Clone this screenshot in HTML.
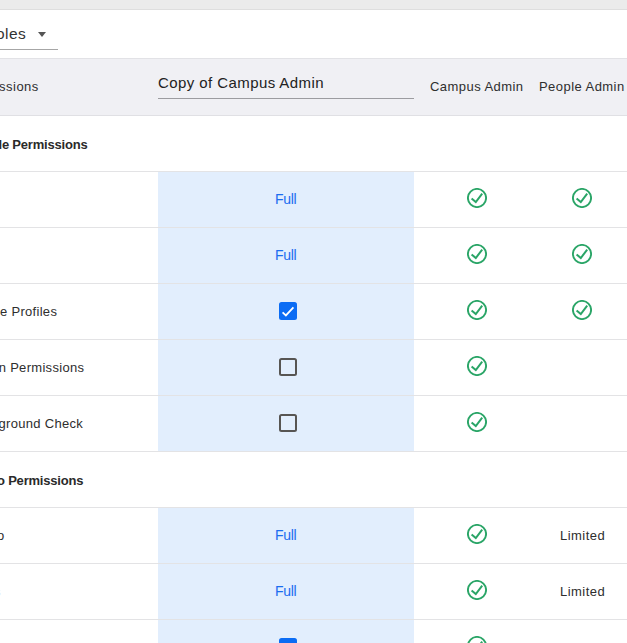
<!DOCTYPE html>
<html><head><meta charset="utf-8">
<style>
*{margin:0;padding:0;box-sizing:border-box}
html,body{width:627px;height:643px;overflow:hidden;background:#fff;font-family:"Liberation Sans",sans-serif;color:#222}
.a{position:absolute}
.topbar{left:0;top:0;width:627px;height:10px;background:#ebebeb;border-bottom:1px solid #dedede}
.hdr{left:0;top:58px;width:627px;height:58px;background:#f0f0f4;border-top:1px solid #e2e2e6;border-bottom:1px solid #e0e0e4}
.hline{left:0;width:627px;height:1px;background:#e3e3e5}
.blue{left:158px;width:256px;background:#e2eefd}
.t{white-space:nowrap;font-size:13px;line-height:1;color:#2e2e2e}
.full{color:#1a6cf0;font-size:14px;letter-spacing:-0.3px}
.chk{width:20px;height:20px}
</style></head><body>
<div class="a topbar"></div>
<!-- dropdown -->
<div class="a t" style="left:-4px;top:26px;font-size:15.5px;color:#333;letter-spacing:0.45px">oles</div>
<svg class="a" style="left:37px;top:31px" width="10" height="7" viewBox="0 0 10 7"><path d="M1 1 L9 1 L5 6 Z" fill="#555"/></svg>
<div class="a" style="left:0;top:49px;width:58px;height:1px;background:#a6a6a6"></div>

<div class="a hdr"></div>
<div class="a t" style="left:-1px;top:80px;font-size:13px;letter-spacing:0.5px">ssions</div>
<div class="a t" style="left:158px;top:75px;font-size:15px;color:#222;letter-spacing:0.42px">Copy of Campus Admin</div>
<div class="a" style="left:158px;top:98px;width:256px;height:1px;background:#9c9ca0"></div>
<div class="a t" style="left:430px;top:80px;font-size:13px;letter-spacing:0.45px">Campus Admin</div>
<div class="a t" style="left:539px;top:80px;font-size:13px;letter-spacing:0.45px">People Admin</div>

<!-- blue column -->
<div class="a blue" style="top:172px;height:280px"></div>
<div class="a blue" style="top:508px;height:135px"></div>

<!-- lines -->
<div class="a hline" style="top:171px"></div>
<div class="a hline" style="top:227px"></div>
<div class="a hline" style="top:283px"></div>
<div class="a hline" style="top:339px"></div>
<div class="a hline" style="top:395px"></div>
<div class="a hline" style="top:451px"></div>
<div class="a hline" style="top:507px"></div>
<div class="a hline" style="top:563px"></div>
<div class="a hline" style="top:619px"></div>

<!-- section titles -->
<div class="a t" style="left:-1.5px;top:138px;font-weight:bold;color:#2a2a2a;letter-spacing:-0.2px">le Permissions</div>
<div class="a t" style="left:-3px;top:474px;font-weight:bold;color:#2a2a2a;letter-spacing:-0.2px">o Permissions</div>

<!-- row labels -->
<div class="a t" style="left:0px;top:305px;letter-spacing:0.3px">e Profiles</div>
<div class="a t" style="left:-1.3px;top:361px;letter-spacing:0.3px">n Permissions</div>
<div class="a t" style="left:-1.5px;top:417px;letter-spacing:0.3px">ground Check</div>
<div class="a t" style="left:-3px;top:529px">o</div>
<div class="a t" style="left:-6px;top:585px;color:#bbb">s</div>

<!-- Full -->
<div class="a t full" style="left:275px;top:192px">Full</div>
<div class="a t full" style="left:275px;top:248px">Full</div>
<div class="a t full" style="left:275px;top:528px">Full</div>
<div class="a t full" style="left:275px;top:584px">Full</div>

<!-- checkboxes -->
<svg class="a" style="left:279px;top:302px" width="18" height="18" viewBox="0 0 18 18"><rect x="0" y="0" width="18" height="18" rx="2.5" fill="#0b6cf4"/><path d="M3.6 10.3 L6.9 13.4 L14.4 5.4" fill="none" stroke="#fff" stroke-width="1.8"/></svg>
<svg class="a" style="left:279px;top:358px" width="18" height="18" viewBox="0 0 18 18"><rect x="1" y="1" width="16" height="16" rx="1.5" fill="none" stroke="#575553" stroke-width="2"/></svg>
<svg class="a" style="left:279px;top:414px" width="18" height="18" viewBox="0 0 18 18"><rect x="1" y="1" width="16" height="16" rx="1.5" fill="none" stroke="#575553" stroke-width="2"/></svg>
<svg class="a" style="left:279px;top:638px" width="18" height="18" viewBox="0 0 18 18"><rect x="0" y="0" width="18" height="18" rx="2.5" fill="#0b6cf4"/></svg>

<!-- green checks -->
<svg width="0" height="0" style="position:absolute"><defs><g id="gc"><circle cx="10" cy="10" r="9.1" fill="none" stroke="#2aa567" stroke-width="1.9"/><path d="M4.6 10.4 L8.8 14 L15.2 5.6" fill="none" stroke="#2aa567" stroke-width="2"/></g></defs></svg>
<svg class="a chk" style="left:467px;top:188px"><use href="#gc"/></svg>
<svg class="a chk" style="left:572px;top:188px"><use href="#gc"/></svg>
<svg class="a chk" style="left:467px;top:244px"><use href="#gc"/></svg>
<svg class="a chk" style="left:572px;top:244px"><use href="#gc"/></svg>
<svg class="a chk" style="left:467px;top:300px"><use href="#gc"/></svg>
<svg class="a chk" style="left:572px;top:300px"><use href="#gc"/></svg>
<svg class="a chk" style="left:467px;top:356px"><use href="#gc"/></svg>
<svg class="a chk" style="left:467px;top:412px"><use href="#gc"/></svg>
<svg class="a chk" style="left:467px;top:524px"><use href="#gc"/></svg>
<svg class="a chk" style="left:467px;top:580px"><use href="#gc"/></svg>
<svg class="a chk" style="left:467px;top:636px"><use href="#gc"/></svg>

<div class="a t" style="left:560px;top:529px;letter-spacing:0.45px">Limited</div>
<div class="a t" style="left:560px;top:585px;letter-spacing:0.45px">Limited</div>
</body></html>
